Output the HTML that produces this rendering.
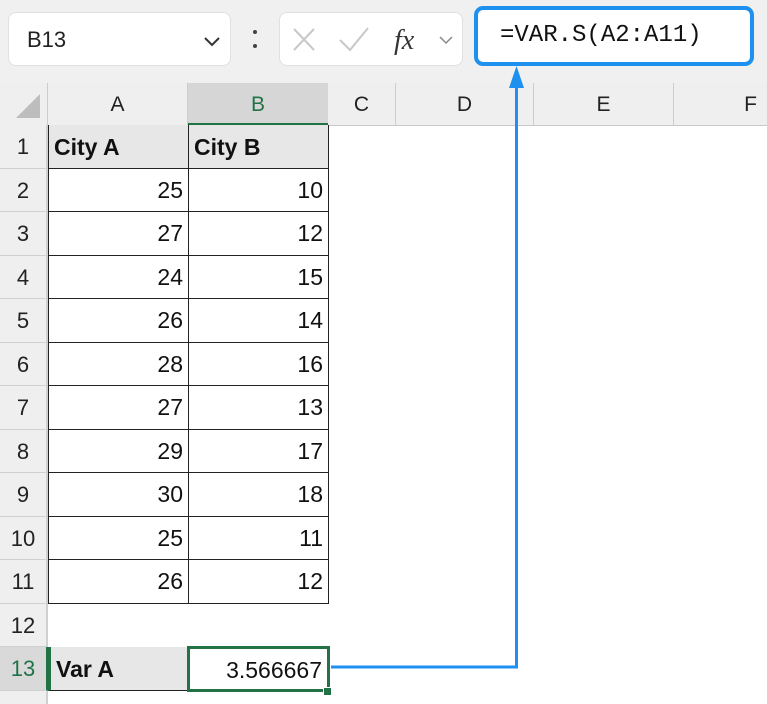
<!DOCTYPE html>
<html><head><style>
body{margin:0;width:767px;height:704px;overflow:hidden;background:#fff;font-family:"Liberation Sans",sans-serif;position:relative}
.a{position:absolute;box-sizing:border-box}
.top{left:0;top:0;width:767px;height:83px;background:#f0f0f0}
.hdr{top:83px;height:43px;background:#efefef;border-bottom:1px solid #c8c8c8;font-size:21px;color:#222;text-align:center;line-height:43px}
.rh{left:0;width:48px;height:43.5px;background:#efefef;border-right:2px solid #d0d0d0;border-bottom:1px solid #d0d0d0;font-size:22px;text-align:center;line-height:44px;color:#222}
.c{height:43.5px;font-size:23px;line-height:44px;color:#111;padding:0 5px}
</style></head><body>
<div class="a top"></div>
<div class="a" style="left:8px;top:12px;width:223px;height:54px;background:#fff;border:1px solid #e0e0e0;border-radius:8px;font-size:22px;line-height:54px;padding-left:18px;color:#222">B13</div>
<svg class="a" style="left:202px;top:34px" width="20" height="14"><path d="M3 4 L10 11 L17 4" fill="none" stroke="#333" stroke-width="2"/></svg>
<div class="a" style="left:253px;top:30px;width:4px;height:4px;background:#444;border-radius:2px"></div>
<div class="a" style="left:253px;top:44px;width:4px;height:4px;background:#444;border-radius:2px"></div>
<div class="a" style="left:279px;top:12px;width:184px;height:54px;background:#fff;border:1px solid #e0e0e0;border-radius:8px"></div>
<svg class="a" style="left:290px;top:24px" width="175" height="32">
<path d="M4 5 L24 26 M24 5 L4 26" stroke="#c8c8c8" stroke-width="2"/>
<path d="M50 16 L60 26 L78 4" fill="none" stroke="#c8c8c8" stroke-width="2"/>
<text x="104" y="25" font-family="Liberation Serif" font-style="italic" font-size="28" fill="#333">fx</text>
<path d="M150 13 L156 19 L162 13" fill="none" stroke="#888" stroke-width="1.5"/>
</svg>
<div class="a" style="left:474px;top:6px;width:280px;height:60px;background:#fff;border:4px solid #1e90f0;border-radius:9px;font-family:'Liberation Mono',monospace;font-size:24px;line-height:52px;padding-left:22px;color:#111">=VAR.S(A2:A11)</div>

<div class="a hdr" style="left:0;width:48px;border-right:1px solid #ccc"></div>
<svg class="a" style="left:14px;top:92px" width="28" height="28"><path d="M26 2 L26 26 L2 26 Z" fill="#bdbdbd"/></svg>
<div class="a hdr" style="left:48px;width:140px;border-right:1px solid #ccc">A</div>
<div class="a hdr" style="left:188px;width:140px;background:#d6d6d6;border-bottom:3px solid #217346;color:#217346">B</div>
<div class="a hdr" style="left:328px;width:68px;border-right:1px solid #ccc">C</div>
<div class="a hdr" style="left:396px;width:138px;border-right:1px solid #ccc">D</div>
<div class="a hdr" style="left:534px;width:140px;border-right:1px solid #ccc">E</div>
<div class="a hdr" style="left:674px;width:93px;padding-left:60px">F</div>

<div id="g"></div>
<script>
var A=[25,27,24,26,28,27,29,30,25,26],B=[10,12,15,14,16,13,17,18,11,12],h='';
for(var i=0;i<13;i++){var y=125+43.5*i;
h+='<div class="a rh" style="top:'+y+'px;'+(i==12?'background:#d9d9d9;color:#217346;border-right:2px solid #217346':'')+'">'+(i+1)+'</div>';
if(i==0){h+='<div class="a c" style="left:48px;top:'+y+'px;width:141px;background:#e7e7e7;border:1px solid #222;border-top:none;font-weight:bold">City A</div>';
h+='<div class="a c" style="left:188px;top:'+y+'px;width:141px;background:#e7e7e7;border:1px solid #222;border-top:none;font-weight:bold">City B</div>';}
else if(i<=10){h+='<div class="a c" style="left:48px;top:'+(y-1)+'px;width:141px;height:44.5px;border:1.5px solid #222;text-align:right;line-height:42px">'+A[i-1]+'</div>';
h+='<div class="a c" style="left:188px;top:'+(y-1)+'px;width:141px;height:44.5px;border:1.5px solid #222;text-align:right;line-height:42px">'+B[i-1]+'</div>';}
else if(i==12){h+='<div class="a c" style="left:48px;top:'+y+'px;width:141px;background:#e7e7e7;border-bottom:1.5px solid #222;border-left:3px solid #217346;font-weight:bold">Var A</div>';
h+='<div class="a c" style="left:187px;top:'+(y-1)+'px;width:143px;height:46px;border:3px solid #217346;text-align:right;line-height:42px">3.566667</div>';
h+='<div class="a" style="left:323px;top:'+(y+40)+'px;width:9px;height:9px;background:#217346;border:1px solid #fff"></div>';}
}
document.getElementById('g').innerHTML=h;
</script>
<div class="a" style="left:0;top:691px;width:48px;height:13px;background:#efefef;border-right:2px solid #d0d0d0"></div>
<svg class="a" style="left:0;top:0" width="767" height="704">
<path d="M331 667 L516.5 667 L516.5 84" fill="none" stroke="#1e90f0" stroke-width="3"/>
<path d="M516.5 66 L509 88 L524 88 Z" fill="#1e90f0"/>
</svg>
</body></html>
